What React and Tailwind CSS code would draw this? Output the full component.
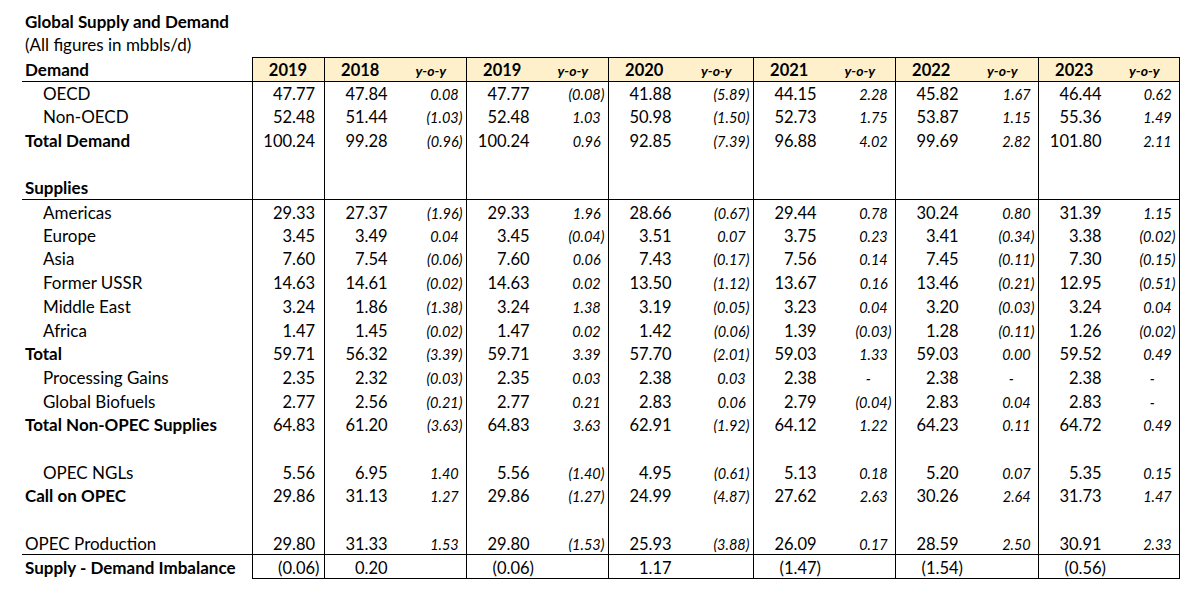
const pairs = [
  { year: "2018", w: 142 },
  { year: "2019", w: 142 },
  { year: "2020", w: 145 },
  { year: "2021", w: 142 },
  { year: "2022", w: 143 },
  { year: "2023", w: 141 },
];

// label, style, first 2019, then [value, y-o-y] for each year pair
const rows = [
  ["OECD", "indent", "47.77", [["47.84", "0.08"], ["47.77", "(0.08)"], ["41.88", "(5.89)"], ["44.15", "2.28"], ["45.82", "1.67"], ["46.44", "0.62"]]],
  ["Non-OECD", "indent", "52.48", [["51.44", "(1.03)"], ["52.48", "1.03"], ["50.98", "(1.50)"], ["52.73", "1.75"], ["53.87", "1.15"], ["55.36", "1.49"]]],
  ["Total Demand", "bold", "100.24", [["99.28", "(0.96)"], ["100.24", "0.96"], ["92.85", "(7.39)"], ["96.88", "4.02"], ["99.69", "2.82"], ["101.80", "2.11"]]],
  ["", "plain", "", []],
  ["Supplies", "section", "", []],
  ["Americas", "indent", "29.33", [["27.37", "(1.96)"], ["29.33", "1.96"], ["28.66", "(0.67)"], ["29.44", "0.78"], ["30.24", "0.80"], ["31.39", "1.15"]]],
  ["Europe", "indent", "3.45", [["3.49", "0.04"], ["3.45", "(0.04)"], ["3.51", "0.07"], ["3.75", "0.23"], ["3.41", "(0.34)"], ["3.38", "(0.02)"]]],
  ["Asia", "indent", "7.60", [["7.54", "(0.06)"], ["7.60", "0.06"], ["7.43", "(0.17)"], ["7.56", "0.14"], ["7.45", "(0.11)"], ["7.30", "(0.15)"]]],
  ["Former USSR", "indent", "14.63", [["14.61", "(0.02)"], ["14.63", "0.02"], ["13.50", "(1.12)"], ["13.67", "0.16"], ["13.46", "(0.21)"], ["12.95", "(0.51)"]]],
  ["Middle East", "indent", "3.24", [["1.86", "(1.38)"], ["3.24", "1.38"], ["3.19", "(0.05)"], ["3.23", "0.04"], ["3.20", "(0.03)"], ["3.24", "0.04"]]],
  ["Africa", "indent", "1.47", [["1.45", "(0.02)"], ["1.47", "0.02"], ["1.42", "(0.06)"], ["1.39", "(0.03)"], ["1.28", "(0.11)"], ["1.26", "(0.02)"]]],
  ["Total", "bold", "59.71", [["56.32", "(3.39)"], ["59.71", "3.39"], ["57.70", "(2.01)"], ["59.03", "1.33"], ["59.03", "0.00"], ["59.52", "0.49"]]],
  ["Processing Gains", "indent", "2.35", [["2.32", "(0.03)"], ["2.35", "0.03"], ["2.38", "0.03"], ["2.38", "-"], ["2.38", "-"], ["2.38", "-"]]],
  ["Global Biofuels", "indent", "2.77", [["2.56", "(0.21)"], ["2.77", "0.21"], ["2.83", "0.06"], ["2.79", "(0.04)"], ["2.83", "0.04"], ["2.83", "-"]]],
  ["Total Non-OPEC Supplies", "bold", "64.83", [["61.20", "(3.63)"], ["64.83", "3.63"], ["62.91", "(1.92)"], ["64.12", "1.22"], ["64.23", "0.11"], ["64.72", "0.49"]]],
  ["", "plain", "", []],
  ["OPEC NGLs", "indent", "5.56", [["6.95", "1.40"], ["5.56", "(1.40)"], ["4.95", "(0.61)"], ["5.13", "0.18"], ["5.20", "0.07"], ["5.35", "0.15"]]],
  ["Call on OPEC", "bold", "29.86", [["31.13", "1.27"], ["29.86", "(1.27)"], ["24.99", "(4.87)"], ["27.62", "2.63"], ["30.26", "2.64"], ["31.73", "1.47"]]],
  ["", "plain", "", []],
  ["OPEC Production", "plain", "29.80", [["31.33", "1.53"], ["29.80", "(1.53)"], ["25.93", "(3.88)"], ["26.09", "0.17"], ["28.59", "2.50"], ["30.91", "2.33"]]],
  ["Supply - Demand Imbalance", "last", "(0.06)", [["0.20", ""], ["(0.06)", ""], ["1.17", ""], ["(1.47)", ""], ["(1.54)", ""], ["(0.56)", ""]]],
];

// accounting style: positives keep room for the closing paren
const Num = ({ v }) => {
  if (!v) return null;
  if (v === "-")
    return (
      <>
        -<span className="invisible">00)</span>
      </>
    );
  if (v.startsWith("(")) return <>{v}</>;
  return (
    <>
      {v}
      <span className="invisible">)</span>
    </>
  );
};

// every cell shares one baseline, like a spreadsheet row
const cell = "h-[23.7px] px-0 pb-0 pt-[3.5px] leading-[17px] align-baseline";

export default function App() {
  return (
    <div
      className="bg-white w-[1200px] h-[600px] pt-[9.6px] pl-[22px] text-black"
      style={{ fontFamily: "Lato, 'Open Sans', sans-serif" }}
    >
      <div className="h-[23.7px] flex items-center pl-[3px] font-bold text-[17px]">
        Global Supply and Demand
      </div>
      <div className="h-[23.7px] flex items-center pl-[3px] text-[17px]">
        (All figures in mbbls/d)
      </div>
      <table className="table-fixed border-collapse text-[16.5px]">
        <colgroup>
          <col className="w-[230px]" />
          <col className="w-[72px]" />
          {pairs.map((p) => (
            <>
              <col key={p.year + "v"} className="w-[72px]" />
              <col key={p.year + "y"} style={{ width: p.w - 72 }} />
            </>
          ))}
        </colgroup>
        <thead>
          <tr>
            <th className={`${cell} text-left text-[17px] font-bold pl-[3px] border-b border-black`}>Demand</th>
            <th className={`${cell} font-bold bg-[#fdf0cb] border border-black`}>2019</th>
            {pairs.map((p) => (
              <>
                <th key={p.year} className={`${cell} font-bold bg-[#fdf0cb] border-y border-black`}>
                  {p.year}
                </th>
                <th
                  key={p.year + "h"}
                  className={`${cell} font-bold italic text-[14px] bg-[#fdf0cb] border-y border-r border-black`}
                >
                  y-o-y
                </th>
              </>
            ))}
          </tr>
        </thead>
        <tbody>
          {rows.map(([label, kind, first, vals], i) => {
            const section = kind === "section";
            const last = kind === "last";
            const rowBorder = section ? "border-b border-black" : last ? "border-t border-black" : "";
            const dataBorder = last ? "border-b border-black" : "";
            return (
              <tr key={i}>
                <td
                  className={`${cell} text-[17px] whitespace-nowrap ${rowBorder} ${
                    kind === "indent" ? "pl-[21px]" : "pl-[3px]"
                  } ${kind === "bold" || section || last ? "font-bold" : ""}`}
                >
                  {label}
                </td>
                <td className={`${cell} text-right pr-[4px] border-x border-black ${rowBorder} ${dataBorder}`}>
                  <Num v={first} />
                </td>
                {pairs.map((p, j) => {
                  const pv = vals[j] || ["", ""];
                  return (
                    <>
                      <td key={j + "v"} className={`${cell} text-right pr-[4px] ${rowBorder} ${dataBorder}`}>
                        <Num v={pv[0]} />
                      </td>
                      <td
                        key={j + "y"}
                        className={`${cell} text-right pr-[3px] italic text-[14.5px] border-r border-black ${rowBorder} ${dataBorder}`}
                      >
                        <Num v={pv[1]} />
                      </td>
                    </>
                  );
                })}
              </tr>
            );
          })}
        </tbody>
      </table>
    </div>
  );
}
